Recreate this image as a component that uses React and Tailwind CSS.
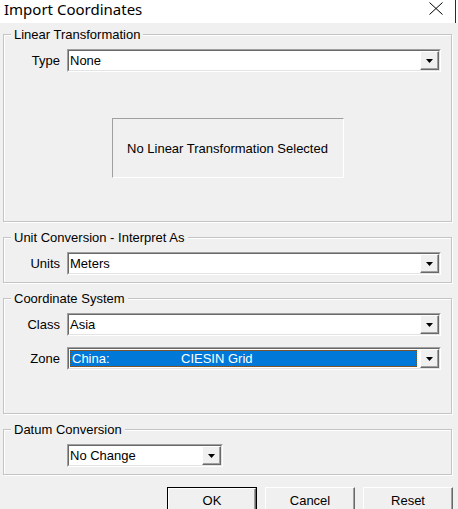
import React from "react";

const Arrow = () => {
  return (
    <div className="flex h-full w-[19px] shrink-0 items-center justify-center border border-t-white border-l-white border-r-[#696969] border-b-[#696969] bg-[#f0f0f0] shadow-[inset_-1px_-1px_0_#a0a0a0]">
      <svg width="7" height="4" viewBox="0 0 7 4">
        <polygon points="0,0 7,0 3.5,4" fill="#000" />
      </svg>
    </div>
  );
};

const Combo = ({ className, children, selected }) => {
  return (
    <div
      className={`h-[23px] border border-t-[#a0a0a0] border-l-[#a0a0a0] border-r-white border-b-white ${className}`}
    >
      <div className="flex h-full border border-t-[#696969] border-l-[#696969] border-r-[#e3e3e3] border-b-[#e3e3e3] bg-white">
        {selected ? (
          <div className="my-[1px] ml-[1px] mr-[3px] flex flex-1 items-center border border-dotted border-[#7a4f22] bg-[#0078d7] pl-[1px] text-white">
            {children}
          </div>
        ) : (
          <div className="flex flex-1 items-center pl-[1px]">{children}</div>
        )}
        <Arrow />
      </div>
    </div>
  );
};

const Row = ({ label, children }) => {
  return (
    <div className="flex items-center">
      <span className="w-[56px] text-right">{label}</span>
      <div className="ml-[7px]">{children}</div>
    </div>
  );
};

const Group = ({ title, className, children }) => {
  return (
    <div
      className={`relative ml-[3px] w-[449px] border border-[#c4c4c4] shadow-[inset_1px_1px_0_#fff,1px_1px_0_#fff] ${className}`}
    >
      <span className="absolute left-[7px] top-[-8px] bg-[#f0f0f0] px-[3px] leading-[15px]">
        {title}
      </span>
      {children}
    </div>
  );
};

const Button = ({ label, isDefault }) => {
  const face = (
    <div className="flex h-full w-full items-center justify-center border border-t-white border-l-white border-r-[#696969] border-b-[#696969] bg-[#f0f0f0] shadow-[inset_-1px_-1px_0_#a0a0a0]">
      {label}
    </div>
  );
  if (isDefault) {
    return <div className="h-[26px] w-[90px] border border-black">{face}</div>;
  }
  return <div className="h-[26px] w-[90px]">{face}</div>;
};

export default function App() {
  return (
    <div className="h-[509px] w-[458px] overflow-hidden bg-[#f0f0f0] font-['Liberation_Sans',Arial,sans-serif] text-[13px] leading-[15px] text-black">
      <div className="flex h-[23px] bg-white">
        <span className="pl-[4px] font-['Noto_Sans',sans-serif] text-[15px] leading-[18px]">
          Import Coordinates
        </span>
        <svg className="ml-auto mt-[2px]" width="14" height="13" viewBox="0 0 14 13">
          <path d="M0.5 0.5 L13.5 12.5 M13.5 0.5 L0.5 12.5" stroke="#000" strokeWidth="1" fill="none" />
        </svg>
        <div className="w-[12px]" />
        <div className="w-px bg-[#2b2b2b]" />
        <div className="w-[2px]" />
      </div>

      <div className="flex flex-col gap-[15px] pt-[11px]">
        <Group title="Linear Transformation" className="h-[188px] pt-[14px]">
          <Row label="Type">
            <Combo className="w-[374px]">None</Combo>
          </Row>
          <div className="mx-auto mt-[46px] flex h-[60px] w-[232px] items-center justify-center border border-t-[#a0a0a0] border-l-[#a0a0a0] border-r-white border-b-white">
            No Linear Transformation Selected
          </div>
        </Group>

        <Group title="Unit Conversion - Interpret As" className="h-[46px] pt-[14px]">
          <Row label="Units">
            <Combo className="w-[374px]">Meters</Combo>
          </Row>
        </Group>

        <Group title="Coordinate System" className="h-[116px] pt-[14px]">
          <div className="flex flex-col gap-[11px]">
            <Row label="Class">
              <Combo className="w-[374px]">Asia</Combo>
            </Row>
            <Row label="Zone">
              <Combo className="w-[374px]" selected>
                <span className="inline-block w-[109px]">China:</span>
                <span>CIESIN Grid</span>
              </Combo>
            </Row>
          </div>
        </Group>

        <Group title="Datum Conversion" className="h-[46px] pt-[14px]">
          <div className="ml-[63px]">
            <Combo className="w-[156px]">No Change</Combo>
          </div>
        </Group>
      </div>

      <div className="mt-[12px] flex justify-end gap-[8px] pr-[5px]">
        <Button label="OK" isDefault />
        <Button label="Cancel" />
        <Button label="Reset" />
      </div>
    </div>
  );
}
